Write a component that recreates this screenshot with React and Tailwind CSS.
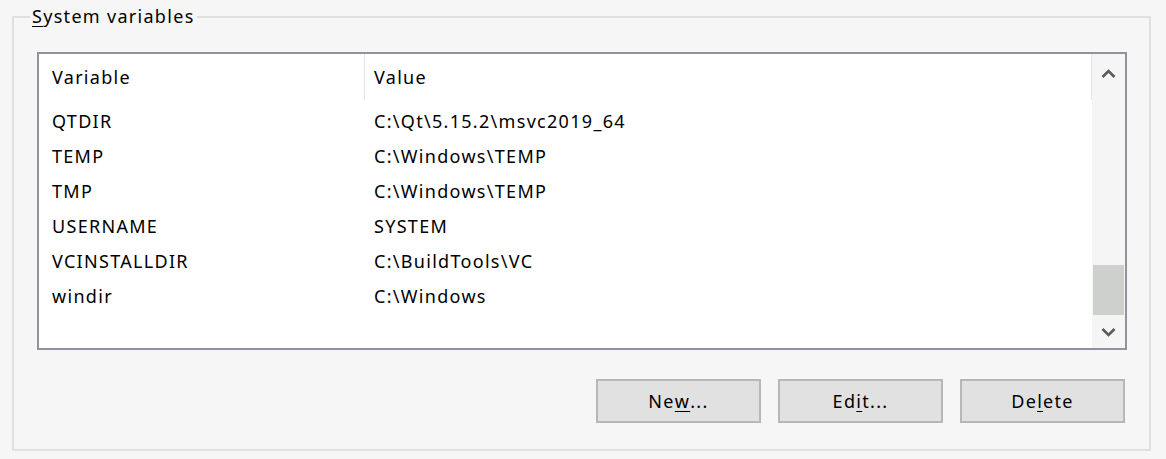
import React from 'react';

const rows = [
  ['QTDIR', 'C:\\Qt\\5.15.2\\msvc2019_64'],
  ['TEMP', 'C:\\Windows\\TEMP'],
  ['TMP', 'C:\\Windows\\TEMP'],
  ['USERNAME', 'SYSTEM'],
  ['VCINSTALLDIR', 'C:\\BuildTools\\VC'],
  ['windir', 'C:\\Windows'],
];

const font = { fontFamily: '"Noto Sans", "Open Sans", sans-serif' };

const Chevron = ({ up }) => (
  <svg width="15" height="10" viewBox="0 0 15 10" fill="none">
    <path
      d={up ? 'M1.5 8 L7.5 2 L13.5 8' : 'M1.5 2 L7.5 8 L13.5 2'}
      stroke="#5a5a5a"
      strokeWidth="2.6"
    />
  </svg>
);

const Btn = ({ children }) => (
  <button className="w-[165px] h-[44px] bg-[#e1e1e1] border-2 border-[#b7b7b7] text-[18px] tracking-[1.3px] text-black flex items-center justify-center">
    {children}
  </button>
);

const Mn = ({ children }) => <u className="underline underline-offset-[3px] decoration-1">{children}</u>;

export default function App() {
  return (
    <div className="w-[1166px] h-[459px] bg-[#f6f6f6] pt-[16px] pl-[12px] text-black" style={font}>
      {/* group box */}
      <div className="relative w-[1139px] h-[435px] border-2 border-[#e0e0e0] pt-[34px] pl-[23px]">
        <span className="absolute top-[-14px] left-[16px] px-[2px] bg-[#f6f6f6] text-[18px] leading-[24px] tracking-[1.3px]">
          <Mn>S</Mn>ystem variables
        </span>

        {/* list view */}
        <div className="w-[1090px] h-[298px] border-2 border-[#8f939c] bg-white flex">
          <div className="flex-1 flex flex-col text-[18px] tracking-[1.3px]">
            <div className="h-[50px] flex items-start">
              <div className="w-[325px] h-[46px] flex items-center pl-[13px]">Variable</div>
              <div className="flex-1 h-[46px] flex items-center pl-[9px] border-l border-[#e5e5e5] border-r">Value</div>
            </div>
            {rows.map(([k, v]) => (
              <div key={k} className="h-[35px] flex items-center">
                <div className="w-[325px] pl-[13px]">{k}</div>
                <div className="flex-1 pl-[10px]">{v}</div>
              </div>
            ))}
          </div>
          {/* scrollbar */}
          <div className="w-[33px] bg-[#f5f5f5] flex flex-col">
            <div className="h-[38px] flex items-center justify-center pt-[2px]">
              <Chevron up />
            </div>
            <div className="flex-1 flex flex-col justify-end px-[1px]">
              <div className="h-[50px] bg-[#cdd0cd]" />
            </div>
            <div className="h-[33px] flex items-center justify-center">
              <Chevron />
            </div>
          </div>
        </div>

        {/* buttons */}
        <div className="w-[1090px] mt-[29px] pr-[2px] flex justify-end gap-[17px]">
          <Btn>Ne<Mn>w</Mn>...</Btn>
          <Btn>Ed<Mn>i</Mn>t...</Btn>
          <Btn>De<Mn>l</Mn>ete</Btn>
        </div>
      </div>
    </div>
  );
}
